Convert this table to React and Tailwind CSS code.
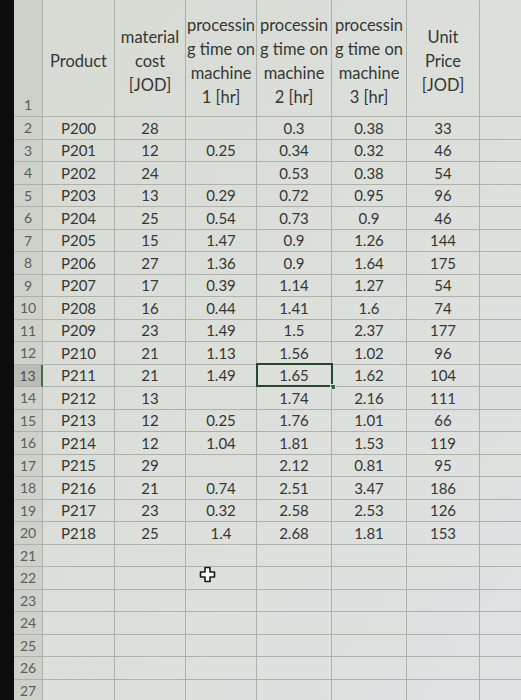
import React from "react";

const data = [
  ["P200", "28", "", "0.3", "0.38", "33"],
  ["P201", "12", "0.25", "0.34", "0.32", "46"],
  ["P202", "24", "", "0.53", "0.38", "54"],
  ["P203", "13", "0.29", "0.72", "0.95", "96"],
  ["P204", "25", "0.54", "0.73", "0.9", "46"],
  ["P205", "15", "1.47", "0.9", "1.26", "144"],
  ["P206", "27", "1.36", "0.9", "1.64", "175"],
  ["P207", "17", "0.39", "1.14", "1.27", "54"],
  ["P208", "16", "0.44", "1.41", "1.6", "74"],
  ["P209", "23", "1.49", "1.5", "2.37", "177"],
  ["P210", "21", "1.13", "1.56", "1.02", "96"],
  ["P211", "21", "1.49", "1.65", "1.62", "104"],
  ["P212", "13", "", "1.74", "2.16", "111"],
  ["P213", "12", "0.25", "1.76", "1.01", "66"],
  ["P214", "12", "1.04", "1.81", "1.53", "119"],
  ["P215", "29", "", "2.12", "0.81", "95"],
  ["P216", "21", "0.74", "2.51", "3.47", "186"],
  ["P217", "23", "0.32", "2.58", "2.53", "126"],
  ["P218", "25", "1.4", "2.68", "1.81", "153"],
];

const cols = "grid-cols-[29px_72px_71px_71px_75px_75px_73px_1fr]";

function HeaderCell({ lines }) {
  return (
    <div className="h-[117px] pt-[6px] flex flex-col items-center justify-center border-r border-b border-[#adb1aa] text-center text-[16.5px] leading-[24px] whitespace-nowrap">
      {lines.map((l, i) => (
        <span key={i}>{l}</span>
      ))}
    </div>
  );
}

function Cursor() {
  return (
    <svg width="17" height="17" viewBox="0 0 17 17" className="absolute left-[13px] top-[-1px]">
      <path
        d="M6 1.5h5v4.5h4.5v5H11v4.5H6V11H1.5V6H6z"
        fill="#fafafa"
        stroke="#1a1a1a"
        strokeWidth="1.6"
        strokeLinejoin="round"
      />
    </svg>
  );
}

export default function App() {
  const rows = [];
  for (let r = 2; r <= 27; r++) {
    const d = data[r - 2] || ["", "", "", "", "", ""];
    rows.push({ r, d });
  }
  return (
    <div
      className="w-[521px] h-[700px] overflow-hidden flex bg-black text-[#343734] text-[15px]"
      style={{ fontFamily: "Lato, 'Open Sans', sans-serif" }}
    >
      <div className="w-[14px] shrink-0 bg-[#0d0d0d]" />
      <div className="flex-1 bg-gradient-to-br from-[#d7dbd3] via-[#dcdfda] to-[#e0e1e4]">
        <div className={`grid ${cols}`}>
          <div className="h-[117px] flex items-end justify-center pb-[1px] border-r border-b border-[#adb1aa] bg-[#cdd1ca] text-[14px] text-[#5b5f5a]">
            1
          </div>
          <HeaderCell lines={["Product"]} />
          <HeaderCell lines={["material", "cost", "[JOD]"]} />
          <HeaderCell lines={["processin", "g time on", "machine", "1 [hr]"]} />
          <HeaderCell lines={["processin", "g time on", "machine", "2 [hr]"]} />
          <HeaderCell lines={["processin", "g time on", "machine", "3 [hr]"]} />
          <HeaderCell lines={["Unit", "Price", "[JOD]"]} />
          <div className="h-[117px] border-b border-[#adb1aa]" />

          {rows.map(({ r, d }) => (
            <React.Fragment key={r}>
              <div
                className={
                  r === 13
                    ? "h-[22.5px] flex items-center justify-center border-b border-[#adb1aa] border-r-2 border-r-[#3f6b47] bg-[#b9bdb6] text-[14px] text-[#4b4f4a]"
                    : "h-[22.5px] flex items-center justify-center border-r border-b border-[#adb1aa] bg-[#cdd1ca] text-[14px] text-[#5b5f5a]"
                }
              >
                {r}
              </div>
              <div className="h-[22.5px] flex items-center justify-center border-r border-b border-[#adb1aa]">{d[0]}</div>
              <div className="h-[22.5px] flex items-center justify-center border-r border-b border-[#adb1aa]">{d[1]}</div>
              <div className="relative h-[22.5px] flex items-center justify-center border-r border-b border-[#adb1aa]">
                {d[2]}
                {r === 22 && <Cursor />}
              </div>
              <div className="relative h-[22.5px] flex items-center justify-center border-r border-b border-[#adb1aa]">
                {d[3]}
                {r === 13 && (
                  <div className="absolute left-[-1px] top-[-2px] right-[-2px] bottom-[-1px] border-2 border-[#27482d]">
                    <div className="absolute right-[-5px] bottom-[-5px] w-[6px] h-[6px] bg-[#2a6a3a] border border-[#e0e3dd]" />
                  </div>
                )}
              </div>
              <div className="h-[22.5px] flex items-center justify-center border-r border-b border-[#adb1aa]">{d[4]}</div>
              <div className="h-[22.5px] flex items-center justify-center border-r border-b border-[#adb1aa]">{d[5]}</div>
              <div className="h-[22.5px] border-b border-[#adb1aa]" />
            </React.Fragment>
          ))}
        </div>
      </div>
    </div>
  );
}
